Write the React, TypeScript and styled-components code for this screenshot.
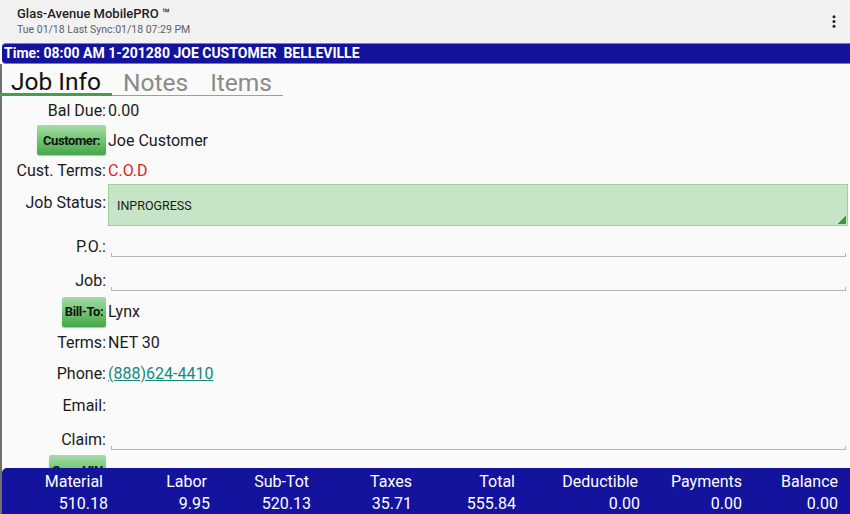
import React from "react";
import styled, {createGlobalStyle} from "styled-components";

const GlobalStyle = createGlobalStyle`
  html, body {
    margin: 0;
    padding: 0;
    background: #fafafa;
    font-family: Roboto, "Noto Sans", "Liberation Sans", sans-serif;
    overflow: hidden;
  }
`;

const Page = styled.div`
  display: flex;
  flex-direction: column;
  height: 514px;
`;

const AppBar = styled.div`
  height: 43px;
  background: #f2f2f2;
  display: flex;
  justify-content: space-between;
  align-items: flex-start;
  padding: 5px 0 0 17px;
  box-sizing: border-box;
`;

const TitleBlock = styled.div`
  display: flex;
  flex-direction: column;
`;

const Title = styled.div`
  font-size: 13px;
  font-weight: 500;
  line-height: 17px;
  color: #1e1e1e;
`;

const SubTitle = styled.div`
  font-size: 10.5px;
  line-height: 15px;
  color: #5f5f5f;
`;

const MenuButton = styled.div`
  width: 32px;
  height: 32px;
  display: flex;
  align-items: center;
  justify-content: center;
`;

const InfoBar = styled.div`
  margin-left: 2px;
  height: 21px;
  box-sizing: border-box;
  background: #13139e;
  border-top: 1px solid #7a7ac8;
  border-bottom: 1px solid #7a7ac8;
  border-radius: 4px 0 0 4px;
  color: #fff;
  font-size: 14px;
  font-weight: 700;
  line-height: 19px;
  padding-left: 2px;
  white-space: pre;
`;

const Body = styled.div`
  flex: 1;
  border-left: 2px solid #707070;
  display: flex;
  flex-direction: column;
`;

const Tabs = styled.div`
  display: flex;
  align-items: flex-end;
  margin-left: -2px;
  height: 32px;
`;

const Tab = styled.div<{ $active?: boolean }>`
  padding: 0 11px ${p => (p.$active ? "0" : "1px")};
  font-size: 24.5px;
  line-height: 22px;
  color: ${p => (p.$active ? "#111" : "#8a8a8a")};
  border-bottom: ${p => (p.$active ? "3px solid #43a047" : "1px solid #9e9e9e")};
`;

const Form = styled.div`
  display: flex;
  flex-direction: column;
`;

const Row = styled.div<{ $h: number; $top?: boolean }>`
  display: grid;
  grid-template-columns: 104px 1fr;
  column-gap: 2px;
  height: ${p => p.$h}px;
  align-items: ${p => (p.$top ? "start" : "center")};
`;

const Label = styled.div<{ $pt?: number }>`
  text-align: right;
  font-size: 16px;
  color: #1a1a1a;
  padding-top: ${p => p.$pt || 0}px;
  white-space: nowrap;
`;

const Value = styled.div<{ $color?: string }>`
  font-size: 16px;
  color: ${p => p.$color || "#1a1a1a"};
  white-space: nowrap;
`;

const LinkValue = styled.a`
  font-size: 16px;
  color: #14897c;
  text-decoration: underline;
`;

const ButtonCell = styled.div`
  display: flex;
  justify-content: flex-end;
`;

const GreenButton = styled.div<{ $w: number }>`
  width: ${p => p.$w}px;
  height: 30px;
  box-sizing: border-box;
  display: flex;
  align-items: center;
  justify-content: center;
  border-radius: 2px;
  background: linear-gradient(to bottom, #a6dca7 0%, #6cc26e 55%, #46a64a 100%);
  box-shadow: 0 1px 1px rgba(0, 0, 0, 0.25);
  font-size: 13px;
  font-weight: 700;
  color: #111;
  white-space: nowrap;
  letter-spacing: -0.4px;
`;

const StatusBox = styled.div`
  height: 42px;
  margin-right: 2px;
  box-sizing: border-box;
  border: 1px solid #9fcf9f;
  display: flex;
  align-items: center;
  padding-left: 8px;
  padding-top: 1px;
  font-size: 12.5px;
  color: #1a1a1a;
  background:
    linear-gradient(135deg, transparent 50%, #3b9a3f 50%) no-repeat right 1px bottom 1px / 8px 8px,
    #c6e4c6;
`;

const LineInput = styled.div`
  height: 23px;
  margin: 6px 4px 0 3px;
  box-sizing: border-box;
  border-bottom: 1px solid #b5b5b5;
  background:
    linear-gradient(#b5b5b5, #b5b5b5) no-repeat left bottom / 1px 3px,
    linear-gradient(#b5b5b5, #b5b5b5) no-repeat right bottom / 1px 3px;
`;

const TotalsBar = styled.div`
  position: fixed;
  left: 2px;
  right: 0;
  bottom: 0;
  height: 46px;
  background: #13139e;
  border-radius: 5px 0 0 0;
  display: grid;
  grid-template-columns: 106px 102px 101px 101px 104px 124px 102px 96px 1fr;
  padding-top: 3px;
  box-sizing: border-box;
  color: #fff;
`;

const TotalCol = styled.div`
  display: flex;
  flex-direction: column;
  align-items: flex-end;
  font-size: 16px;
  line-height: 22px;
`;

const TotalLabel = styled.span<{ $shift: number }>`
  margin-right: ${p => p.$shift}px;
`;

const totals: [string, string, number][] = [
    ["Material", "510.18", 5],
    ["Labor", "9.95", 3],
    ["Sub-Tot", "520.13", 2],
    ["Taxes", "35.71", 0],
    ["Total", "555.84", 1],
    ["Deductible", "0.00", 2],
    ["Payments", "0.00", 0],
    ["Balance", "0.00", 0],
];

const App = () => {
    return (
        <Page>
            <GlobalStyle/>
            <AppBar>
                <TitleBlock>
                    <Title>Glas-Avenue MobilePRO ™</Title>
                    <SubTitle>Tue 01/18 Last Sync:01/18 07:29 PM</SubTitle>
                </TitleBlock>
                <MenuButton>
                    <svg width="4" height="13" viewBox="0 0 4 13">
                        <circle cx="2" cy="1.8" r="1.5" fill="#222"/>
                        <circle cx="2" cy="6.5" r="1.5" fill="#222"/>
                        <circle cx="2" cy="11.2" r="1.5" fill="#222"/>
                    </svg>
                </MenuButton>
            </AppBar>
            <InfoBar>{"Time: 08:00 AM 1-201280 JOE CUSTOMER  BELLEVILLE"}</InfoBar>
            <Body>
                <Tabs>
                    <Tab $active>Job Info</Tab>
                    <Tab>Notes</Tab>
                    <Tab>Items</Tab>
                </Tabs>
                <Form>
                    <Row $h={28}>
                        <Label>Bal Due:</Label>
                        <Value>0.00</Value>
                    </Row>
                    <Row $h={32}>
                        <ButtonCell><GreenButton $w={69}>Customer:</GreenButton></ButtonCell>
                        <Value>Joe Customer</Value>
                    </Row>
                    <Row $h={28}>
                        <Label>Cust. Terms:</Label>
                        <Value $color="#e2231a">C.O.D</Value>
                    </Row>
                    <Row $h={44} $top>
                        <Label $pt={9}>Job Status:</Label>
                        <StatusBox>INPROGRESS</StatusBox>
                    </Row>
                    <Row $h={34} $top>
                        <Label $pt={9}>P.O.:</Label>
                        <LineInput/>
                    </Row>
                    <Row $h={34} $top>
                        <Label $pt={9}>Job:</Label>
                        <LineInput/>
                    </Row>
                    <Row $h={31}>
                        <ButtonCell><GreenButton $w={44}>Bill-To:</GreenButton></ButtonCell>
                        <Value>Lynx</Value>
                    </Row>
                    <Row $h={31}>
                        <Label>Terms:</Label>
                        <Value>NET 30</Value>
                    </Row>
                    <Row $h={31}>
                        <Label>Phone:</Label>
                        <div><LinkValue>(888)624-4410</LinkValue></div>
                    </Row>
                    <Row $h={32}>
                        <Label>Email:</Label>
                        <Value/>
                    </Row>
                    <Row $h={34} $top>
                        <Label $pt={9}>Claim:</Label>
                        <LineInput/>
                    </Row>
                    <Row $h={32} $top>
                        <ButtonCell><GreenButton $w={57}>Scan VIN</GreenButton></ButtonCell>
                        <Value/>
                    </Row>
                </Form>
            </Body>
            <TotalsBar>
                {totals.map(([label, value, shift]) => (
                    <TotalCol key={label}>
                        <TotalLabel $shift={shift}>{label}</TotalLabel>
                        <span>{value}</span>
                    </TotalCol>
                ))}
            </TotalsBar>
        </Page>
    );
};

export default App;
